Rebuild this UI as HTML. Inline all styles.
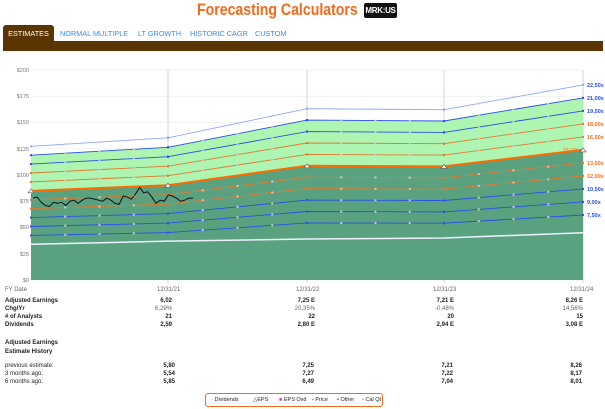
<!DOCTYPE html>
<html><head><meta charset="utf-8"><style>
*{margin:0;padding:0;box-sizing:border-box}
body{width:605px;height:409px;background:#fff;font-family:"Liberation Sans",sans-serif;position:relative;overflow:hidden}
.title{position:absolute;left:197px;top:0px;font-size:17px;font-weight:bold;color:#f26a1b;transform:scaleX(0.83);transform-origin:0 0;white-space:nowrap}
.badge{position:absolute;left:364px;top:3px;width:33px;height:15px;background:#111;color:#fff;font-size:8px;font-weight:bold;text-align:center;line-height:15px;border-radius:2px;letter-spacing:-0.3px}
.tabbar{position:absolute;left:3px;top:41px;width:600px;height:10px;background:#5a3500}
.tab{position:absolute;top:29px;font-size:7.3px;color:#3b8be8}
.tab0{position:absolute;left:3px;top:25px;width:51px;height:18px;background:#5a3500;color:#fff;font-size:7.3px;line-height:18px;text-align:center;border-radius:3px 3px 0 0}
.t{position:absolute;font-size:6px;color:#222;white-space:nowrap}
.b{font-weight:bold}
.r{text-align:right;width:60px}
.g{color:#666}
.legend{position:absolute;left:205px;top:393px;width:178px;height:14px;border:1.5px solid #f26a1b;border-radius:3px;font-size:5.5px;color:#222}
.legend span{position:absolute;top:3px;white-space:nowrap}
</style></head><body>
<div class="title">Forecasting Calculators</div>
<div class="badge">MRK:US</div>
<div class="tab0">ESTIMATES</div>
<div class="tab" style="left:60px">NORMAL MULTIPLE</div>
<div class="tab" style="left:138px">LT GROWTH</div>
<div class="tab" style="left:190px">HISTORIC CAGR</div>
<div class="tab" style="left:255px">CUSTOM</div>
<div class="tabbar"></div>
<svg id="c" width="605" height="295" style="position:absolute;left:0;top:0" font-family="Liberation Sans,sans-serif" font-size="5.5">
<g fill="#777" text-anchor="end">
<text x="29" y="72">$200</text><text x="29" y="98">$175</text><text x="29" y="124">$150</text><text x="29" y="151">$125</text><text x="29" y="177">$100</text><text x="29" y="203">$75</text><text x="29" y="229">$50</text><text x="29" y="256">$25</text><text x="29" y="282">$0</text>
</g>
<g id="grid"></g>
<g id="plot"></g>
<g font-size="5.5" font-weight="bold">
<text x="587" y="87" fill="#2a4fe0">22,50x</text>
<text x="587" y="100" fill="#2a4fe0">21,00x</text>
<text x="587" y="113" fill="#2a4fe0">19,50x</text>
<text x="587" y="126" fill="#f07020">18,00x</text>
<text x="587" y="139" fill="#f07020">16,50x</text>
<text x="563" y="152" fill="#f07020" font-weight="normal">15,00x</text>
<text x="587" y="165" fill="#f07020">13,50x</text>
<text x="587" y="178" fill="#f07020">12,00x</text>
<text x="587" y="191" fill="#2a4fe0">10,50x</text>
<text x="587" y="204" fill="#2a4fe0">9,00x</text>
<text x="587" y="217" fill="#2a4fe0">7,50x</text>
</g>
</svg>
<div class="t g" style="left:5px;top:287px">FY Date</div>
<div class="t g" style="left:157px;top:287px">12/31/21</div>
<div class="t g" style="left:296px;top:287px">12/31/22</div>
<div class="t g" style="left:433px;top:287px">12/31/23</div>
<div class="t g" style="left:570px;top:287px">12/31/24</div>
<div class="t b" style="left:5px;top:297px;line-height:8px">Adjusted Earnings<br>Chg/Yr<br># of Analysts<br>Dividends</div>
<div class="t r" style="left:112px;top:297px;line-height:8px;text-align:right"><b>6,02</b><br><span class="g">6,29%</span><br><b>21</b><br><b>2,59</b></div>
<div class="t r" style="left:255px;top:297px;line-height:8px;text-align:right"><b>7,25 E</b><br><span class="g">20,35%</span><br><b>22</b><br><b>2,80 E</b></div>
<div class="t r" style="left:394px;top:297px;line-height:8px;text-align:right"><b>7,21 E</b><br><span class="g">-0,48%</span><br><b>20</b><br><b>2,94 E</b></div>
<div class="t r" style="left:523px;top:297px;line-height:8px;text-align:right"><b>8,26 E</b><br><span class="g">14,56%</span><br><b>15</b><br><b>3,08 E</b></div>
<div class="t b" style="left:5px;top:339px;line-height:9px">Adjusted Earnings<br>Estimate History</div>
<div class="t" style="left:5px;top:362px;line-height:8px">previous estimate:<br>3 months ago:<br>6 months ago:</div>
<div class="t r b" style="left:115px;top:362px;line-height:8px">5,80<br>5,54<br>5,85</div>
<div class="t r b" style="left:254px;top:362px;line-height:8px">7,25<br>7,27<br>6,49</div>
<div class="t r b" style="left:393px;top:362px;line-height:8px">7,21<br>7,22<br>7,04</div>
<div class="t r b" style="left:522px;top:362px;line-height:8px">8,26<br>8,17<br>8,01</div>
<div class="legend">
<span style="left:5px"><b style="color:#cde">•</b> Dividends</span>
<span style="left:47px">△EPS</span>
<span style="left:73px"><b style="color:#e040e0">■</b> EPS Ovd</span>
<span style="left:106px"><b>-</b> Price</span>
<span style="left:131px"><b style="color:#2040e0">•</b> Other</span>
<span style="left:156px"><b style="color:#8ac">•</b> Cal Qt</span>
</div>
<script>
var X=[31,168,307,444,583],E=[5.66,6.02,7.25,7.21,8.26],D=[34,37,39,40,45];
function y(v){return 280-1.05*v}
var ns="http://www.w3.org/2000/svg";
function el(t,a,p){var e=document.createElementNS(ns,t);for(var k in a)e.setAttribute(k,a[k]);p.appendChild(e);return e}
var g=document.getElementById('grid'),p=document.getElementById('plot');
for(var v=0;v<=200;v+=25)el('line',{x1:31,x2:583,y1:y(v),y2:y(v),stroke:'#eee','stroke-width':0.7},g);
[168,307,444,583].forEach(function(x){el('line',{x1:x,x2:x,y1:70,y2:283,stroke:'#e4e4e4','stroke-width':1.5},g)});
function pts(m){return X.map(function(x,i){return x+','+y(m*E[i]).toFixed(1)})}
el('polygon',{points:pts(21).join(' ')+' '+pts(15).reverse().join(' '),fill:'#adf5b0'},p);
el('polygon',{points:pts(15).join(' ')+' 583,280 31,280',fill:'#5aa27f'},p);
var ms=[22.5,21,19.5,18,16.5,13.5,12,10.5,9,7.5];
ms.forEach(function(m){var c=m>=19.5||m<=10.5?'#2a50e8':'#e07a30';if(m==22.5)c='#8fa6ff';
el('polyline',{points:pts(m).join(' '),fill:'none',stroke:c,'stroke-width':0.9},p);
for(var i=0;i<4;i++)for(var k=0;k<=4;k++){var t=k/4,xx=X[i]+(X[i+1]-X[i])*t,yy=y(m*(E[i]+(E[i+1]-E[i])*t));el('rect',{x:xx-1,y:yy-1,width:2,height:2,fill:(k==0||k==4)?c:'#ccc'},p)}});
el('polyline',{points:X.map(function(x,i){return x+','+y(D[i])}).join(' '),fill:'none',stroke:'#eef','stroke-width':1.5},p);
el('polyline',{points:pts(15).join(' '),fill:'none',stroke:'#ff6a00','stroke-width':2},p);
X.forEach(function(x,i){el('path',{d:'M'+(x-3)+','+(y(15*E[i])+2)+' l3,-4 l3,4z',fill:'#fff',stroke:'#555','stroke-width':0.6},p)});
var pr=[78,79,74,71,70,74,73,74,71,75,76,73,76,78,78,77,76,75,78,76,73,72,80,79,77,82,88,83,84,79,73,76,75,81,80,78,75,76,78,78];
el('polyline',{points:pr.map(function(v,i){return (33+i*4.1).toFixed(1)+','+y(v)}).join(' '),fill:'none',stroke:'#111','stroke-width':1},p);
</script>
</body></html>
